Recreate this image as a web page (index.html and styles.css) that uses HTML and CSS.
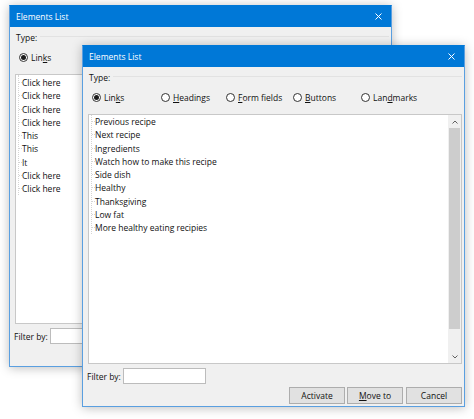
FILE: index.html
```html
<!DOCTYPE html>
<html lang="en">
<head>
<meta charset="utf-8">
<title>Elements List</title>
<link rel="stylesheet" href="styles.css">
</head>
<body>
<div class="desk">

  <section class="win win-back">
    <header class="titlebar">
      <span class="title">Elements List</span>
      <svg class="close" width="7" height="7" viewBox="0 0 7 7"><path d="M0.5 0.5L6.5 6.5M6.5 0.5L0.5 6.5" stroke="#fff" stroke-width="1" fill="none"/></svg>
    </header>
    <div class="group">
      <div class="group-head"><span>Type:</span></div>
      <div class="radios">
        <label class="opt"><span class="radio on"></span><span>Lin<u>k</u>s</span></label>
      </div>
    </div>
    <div class="list list-back">
      <ul class="items">
        <li>Click here</li>
        <li>Click here</li>
        <li>Click here</li>
        <li>Click here</li>
        <li>This</li>
        <li>This</li>
        <li>It</li>
        <li>Click here</li>
        <li>Click here</li>
      </ul>
    </div>
    <div class="filter">
      <span class="filter-label">Filter by:</span>
      <span class="filter-input"></span>
    </div>
  </section>

  <section class="win win-front">
    <header class="titlebar">
      <span class="title">Elements List</span>
      <svg class="close" width="7" height="7" viewBox="0 0 7 7"><path d="M0.5 0.5L6.5 6.5M6.5 0.5L0.5 6.5" stroke="#fff" stroke-width="1" fill="none"/></svg>
    </header>
    <div class="group">
      <div class="group-head"><span>Type:</span></div>
      <div class="radios">
        <label class="opt"><span class="radio on"></span><span>Lin<u>k</u>s</span></label>
        <label class="opt"><span class="radio"></span><span><u>H</u>eadings</span></label>
        <label class="opt"><span class="radio"></span><span><u>F</u>orm fields</span></label>
        <label class="opt"><span class="radio"></span><span><u>B</u>uttons</span></label>
        <label class="opt"><span class="radio"></span><span>Lan<u>d</u>marks</span></label>
      </div>
    </div>
    <div class="list">
      <ul class="items">
        <li>Previous recipe</li>
        <li>Next recipe</li>
        <li>Ingredients</li>
        <li>Watch how to make this recipe</li>
        <li>Side dish</li>
        <li>Healthy</li>
        <li>Thanksgiving</li>
        <li>Low fat</li>
        <li>More healthy eating recipies</li>
      </ul>
      <div class="scrollbar">
        <div class="sb-btn"><svg width="6" height="4" viewBox="0 0 6 4"><path d="M0.5 3.5L3 1L5.5 3.5" stroke="#606060" stroke-width="1" fill="none"/></svg></div>
        <div class="sb-track"><div class="sb-thumb"></div></div>
        <div class="sb-btn"><svg width="6" height="4" viewBox="0 0 6 4"><path d="M0.5 0.5L3 3L5.5 0.5" stroke="#606060" stroke-width="1" fill="none"/></svg></div>
      </div>
    </div>
    <div class="filter">
      <span class="filter-label">Filter by:</span>
      <span class="filter-input"></span>
    </div>
    <div class="buttons">
      <span class="btn">Activate</span>
      <span class="btn"><span><u>M</u>ove to</span></span>
      <span class="btn btn-cancel">Cancel</span>
    </div>
  </section>

</div>
</body>
</html>
```
FILE: styles.css
```css
html, body {
  margin: 0;
  padding: 0;
  background: #ffffff;
}

body {
  font-family: "Open Sans", "Noto Sans", "DejaVu Sans", sans-serif;
  font-size: 8.5px;
  color: #111111;
}

.desk {
  position: relative;
  width: 474px;
  height: 419px;
  overflow: hidden;
}

.win {
  position: absolute;
  width: 383px;
  height: 362px;
  box-sizing: border-box;
  border: 1px solid #5a9fe0;
  border-top-color: #0078d7;
  background: #f0f0f0;
  box-shadow: 0 1px 10px rgba(0, 0, 0, 0.26);
  display: flex;
  flex-direction: column;
}

.win-back {
  left: 9px;
  top: 5px;
}

.win-front {
  left: 82px;
  top: 45px;
}

.titlebar {
  flex: none;
  height: 21px;
  background: #0078d7;
  color: #ffffff;
  display: flex;
  align-items: center;
  justify-content: space-between;
  padding: 0 9px 0 6px;
}

.title {
  line-height: 12px;
}

.close {
  display: block;
}

.group {
  flex: none;
  margin: 3px 2px 0 0;
}

.group-head {
  display: flex;
  align-items: center;
  height: 14px;
  padding-left: 6px;
}

.group-head::after {
  content: "";
  flex: 1;
  border-top: 1px solid #e2e2e2;
  margin: -1px 0 0 3px;
}

.radios {
  display: grid;
  grid-template-columns: 69px 65px 67px 68px auto;
  align-items: center;
  height: 14px;
  margin-top: 6px;
  padding-left: 9px;
}

.opt {
  display: flex;
  align-items: center;
  gap: 3px;
  white-space: nowrap;
}

.radio {
  width: 9px;
  height: 9px;
  box-sizing: border-box;
  border: 1px solid #333333;
  border-radius: 50%;
  background: #ffffff;
  display: flex;
  align-items: center;
  justify-content: center;
}

.radio.on::after {
  content: "";
  width: 5px;
  height: 5px;
  border-radius: 50%;
  background: #1b1b1b;
}

.list {
  flex: none;
  height: 250px;
  margin: 10px 2px 0 5px;
  box-sizing: border-box;
  border: 1px solid #c8c8c8;
  background: #ffffff;
  display: flex;
}

.items {
  flex: 1;
  list-style: none;
  margin: 0 0 auto 2px;
  padding: 0;
  border-left: 1px dotted #d4d4d4;
}

.items li {
  display: flex;
  align-items: center;
  height: 13.25px;
  line-height: 13.25px;
  white-space: nowrap;
}

.items li::before {
  content: "";
  width: 3px;
  border-top: 1px dotted #d4d4d4;
}

.list-back .items {
  padding-top: 1px;
}

.scrollbar {
  flex: none;
  width: 13px;
  background: #f0f0f0;
  display: flex;
  flex-direction: column;
}

.sb-btn {
  flex: none;
  height: 13px;
  display: flex;
  align-items: center;
  justify-content: center;
}

.sb-btn svg {
  display: block;
}

.sb-track {
  flex: 1;
  padding: 0 1px;
}

.sb-thumb {
  height: 201px;
  background: #cdcdcd;
}

.filter {
  flex: none;
  display: flex;
  align-items: center;
  height: 16px;
  margin-top: 4px;
  padding-left: 4px;
}

.filter-label {
  width: 36px;
}

.filter-input {
  width: 83px;
  height: 16px;
  box-sizing: border-box;
  border: 1px solid #bcbcbc;
  background: #ffffff;
}

.buttons {
  flex: none;
  display: flex;
  justify-content: flex-end;
  gap: 2px;
  margin: 3px 2px 0 0;
}

.btn {
  width: 56px;
  height: 17px;
  box-sizing: border-box;
  border: 1px solid #adadad;
  background: #e1e1e1;
  display: flex;
  align-items: center;
  justify-content: center;
}

.btn-cancel {
  margin-left: 1px;
}
```
